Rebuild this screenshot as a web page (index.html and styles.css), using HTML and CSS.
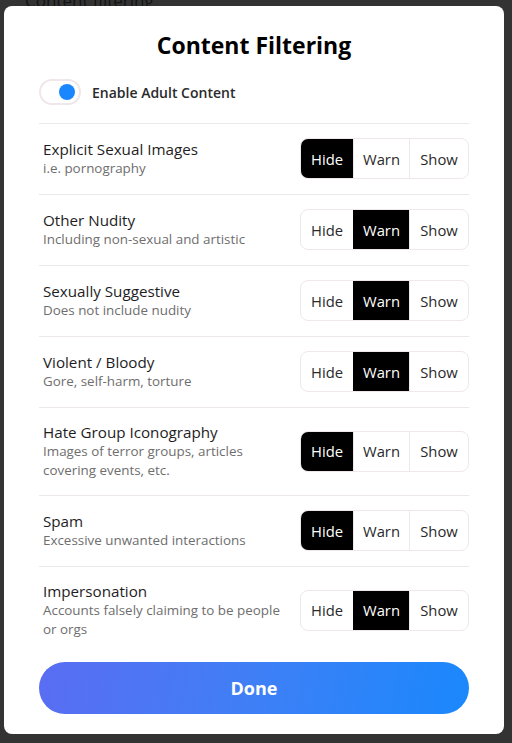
FILE: index.html
```html
<!DOCTYPE html>
<html lang="en">
<head>
<meta charset="utf-8">
<title>Content Filtering</title>
<link rel="stylesheet" href="styles.css">
</head>
<body>
<div class="page">
  <div class="page-title">Content filtering</div>
</div>
<div class="overlay">
  <div class="modal">
    <h1 class="title">Content Filtering</h1>
    <div class="toggle-row">
      <span class="toggle"><span class="knob"></span></span>
      <span class="toggle-label">Enable Adult Content</span>
    </div>
    <div class="list">
      <div class="row">
        <div class="info">
          <div class="name">Explicit Sexual Images</div>
          <div class="desc">i.e. pornography</div>
        </div>
        <div class="seg">
          <span class="opt on">Hide</span><span class="opt">Warn</span><span class="opt">Show</span>
        </div>
      </div>
      <div class="row">
        <div class="info">
          <div class="name">Other Nudity</div>
          <div class="desc">Including non-sexual and artistic</div>
        </div>
        <div class="seg">
          <span class="opt">Hide</span><span class="opt on">Warn</span><span class="opt">Show</span>
        </div>
      </div>
      <div class="row">
        <div class="info">
          <div class="name">Sexually Suggestive</div>
          <div class="desc">Does not include nudity</div>
        </div>
        <div class="seg">
          <span class="opt">Hide</span><span class="opt on">Warn</span><span class="opt">Show</span>
        </div>
      </div>
      <div class="row">
        <div class="info">
          <div class="name">Violent / Bloody</div>
          <div class="desc">Gore, self-harm, torture</div>
        </div>
        <div class="seg">
          <span class="opt">Hide</span><span class="opt on">Warn</span><span class="opt">Show</span>
        </div>
      </div>
      <div class="row">
        <div class="info">
          <div class="name">Hate Group Iconography</div>
          <div class="desc">Images of terror groups, articles covering events, etc.</div>
        </div>
        <div class="seg">
          <span class="opt on">Hide</span><span class="opt">Warn</span><span class="opt">Show</span>
        </div>
      </div>
      <div class="row">
        <div class="info">
          <div class="name">Spam</div>
          <div class="desc">Excessive unwanted interactions</div>
        </div>
        <div class="seg">
          <span class="opt on">Hide</span><span class="opt">Warn</span><span class="opt">Show</span>
        </div>
      </div>
      <div class="row">
        <div class="info">
          <div class="name">Impersonation</div>
          <div class="desc">Accounts falsely claiming to be people or orgs</div>
        </div>
        <div class="seg">
          <span class="opt">Hide</span><span class="opt on">Warn</span><span class="opt">Show</span>
        </div>
      </div>
    </div>
    <button class="done">Done</button>
  </div>
</div>
</body>
</html>
```

FILE: styles.css
```css
* { box-sizing: border-box; }
html, body { margin: 0; padding: 0; }
body {
  width: 512px;
  height: 743px;
  overflow: hidden;
  background: #333333;
  font-family: "Open Sans", "Noto Sans", "Liberation Sans", sans-serif;
  position: relative;
}
.page { padding: 0 0 0 25px; }
.page-title {
  margin-top: -9px;
  font-size: 17px;
  color: #141414;
  line-height: 20px;
}
.overlay {
  position: absolute;
  inset: 0;
}
.modal {
  position: absolute;
  left: 4px;
  top: 6px;
  width: 500px;
  background: #ffffff;
  border-radius: 8px;
  padding: 24px 35px 20px;
  display: flex;
  flex-direction: column;
}
.title {
  margin: 0;
  text-align: center;
  font-size: 23px;
  line-height: 30px;
  font-weight: 700;
  color: #000;
}
.toggle-row {
  display: flex;
  align-items: center;
  gap: 11px;
  margin-top: 19px;
  padding-bottom: 18px;
  border-bottom: 1px solid #ece8ea;
}
.toggle {
  width: 42px;
  height: 26px;
  border: 2px solid #efe7ea;
  border-radius: 13px;
  display: flex;
  align-items: center;
  justify-content: flex-end;
  padding-right: 4px;
}
.knob {
  width: 16px;
  height: 16px;
  border-radius: 50%;
  background: #1a87ff;
}
.toggle-label {
  font-size: 14px;
  font-weight: 600;
  color: #2a2a2a;
}
.row {
  display: flex;
  align-items: center;
  justify-content: space-between;
  padding: 14px 0 15px;
  border-bottom: 1px solid #ece8ea;
}
.row:last-child { border-bottom: none; }
.info {
  padding-left: 4px;
  width: 252px;
}
.name {
  font-size: 15.2px;
  line-height: 20px;
  font-weight: 500;
  color: #1e1e1e;
}
.desc {
  font-size: 13.4px;
  line-height: 19px;
  color: #6e6e6e;
}
.seg {
  flex-shrink: 0;
  display: grid;
  grid-template-columns: 52px 56px 59px;
  height: 41px;
  border: 1px solid #eee8eb;
  border-radius: 8px;
  overflow: hidden;
}
.opt {
  display: flex;
  align-items: center;
  justify-content: center;
  font-size: 14.8px;
  color: #2a2a2a;
  border-left: 1px solid #eee8eb;
}
.opt:first-child { border-left: none; }
.opt.on {
  background: #000;
  color: #fff;
  font-weight: 500;
  border-left-color: #000;
}
.done {
  flex-shrink: 0;
  margin-top: 8px;
  height: 52px;
  border: none;
  border-radius: 26px;
  background: linear-gradient(100deg, #5a6df2 0%, #3f7ff6 50%, #1a88fc 100%);
  color: #fff;
  font-family: inherit;
  font-size: 18px;
  font-weight: 700;
}
```
